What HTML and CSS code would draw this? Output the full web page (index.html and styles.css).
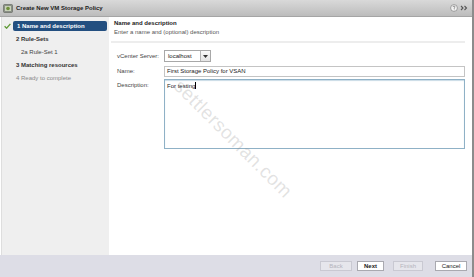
FILE: index.html
```html
<!DOCTYPE html>
<html>
<head>
<meta charset="utf-8">
<link rel="stylesheet" href="styles.css">
</head>
<body>
<div class="window">
  <div class="titlebar">
    <svg class="ticon" width="10" height="10" viewBox="0 0 10 10">
      <rect x="0.5" y="1.5" width="9" height="8" rx="1" fill="#8a8f86" stroke="#5d6258" stroke-width="0.6"/>
      <rect x="2" y="3" width="6" height="5" fill="#c9d2b8"/>
      <circle cx="5" cy="5.5" r="1.8" fill="#6f8f3c"/>
    </svg>
    <span class="ttext">Create New VM Storage Policy</span>
    <span class="tright">
      <svg width="8" height="8" viewBox="0 0 8 8"><circle cx="4" cy="4" r="3.4" fill="#f4f4f4" stroke="#8a8a8a" stroke-width="0.8"/><path d="M3 3.1 Q3 2.1 4 2.1 Q5 2.1 5 3 Q5 3.6 4.2 4 L4.2 4.8" fill="none" stroke="#666" stroke-width="0.7"/><circle cx="4.2" cy="5.8" r="0.4" fill="#666"/></svg>
      <svg width="8" height="8" viewBox="0 0 8 8"><path d="M1 2 L3 4 L1 6 M4.5 2 L6.5 4 L4.5 6" fill="none" stroke="#555" stroke-width="1.1"/></svg>
    </span>
  </div>
  <div class="main">
    <div class="sidebar">
      <div class="step">
        <span class="check"><svg width="7" height="6" viewBox="0 0 7 6"><path d="M0.6 3.2 L2.6 5.2 L6.4 0.8" fill="none" stroke="#5f9a35" stroke-width="1.3"/></svg></span>
        <span class="pill">1 Name and description</span>
      </div>
      <div class="step bold">2 Rule-Sets</div>
      <div class="step sub">2a Rule-Set 1</div>
      <div class="step bold">3 Matching resources</div>
      <div class="step dim">4 Ready to complete</div>
    </div>
    <div class="content">
      <div class="header">
        <div class="htitle">Name and description</div>
        <div class="hsub">Enter a name and (optional) description</div>
      </div>
      <div class="form">
        <div class="row r1">
          <div class="label">vCenter Server:</div>
          <div class="select"><span class="sval">localhost</span><span class="sbtn"><svg width="5" height="3" viewBox="0 0 5 3"><path d="M0 0 L5 0 L2.5 3 Z" fill="#333"/></svg></span></div>
        </div>
        <div class="row r2">
          <div class="label">Name:</div>
          <div class="input">First Storage Policy for VSAN</div>
        </div>
        <div class="row r3">
          <div class="label">Description:</div>
          <div class="textarea">For testing<span class="caret"></span></div>
        </div>
      </div>
    </div>
  </div>
  <div class="footer">
    <span class="btn disabled b-back">Back</span>
    <span class="btn b-next">Next</span>
    <span class="btn disabled b-finish">Finish</span>
    <span class="btn b-cancel">Cancel</span>
  </div>
  <div class="watermark">settlersoman.com</div>
</div>
</body>
</html>
```
FILE: styles.css
```css
* { box-sizing: border-box; }
html, body { margin: 0; padding: 0; background: #ffffff; }
body { width: 474px; height: 277px; overflow: hidden; font-family: "Liberation Sans", Arial, sans-serif; font-size: 6px; color: #333; }

.window {
  position: relative;
  width: 474px;
  height: 277px;
  border-right: 2px solid #8c8c8c;
  display: flex;
  flex-direction: column;
  background: #fff;
}

.titlebar {
  height: 17px;
  flex: 0 0 17px;
  display: flex;
  align-items: center;
  padding: 0 4px 1px 3px;
  background: linear-gradient(#d9d9d9, #bcbcbc);
  border-bottom: 1px solid #a5a5a5;
}
.ticon { flex: 0 0 auto; margin-right: 3px; }
.ttext { font-weight: bold; color: #222; font-size: 6px; flex: 1; }
.tright { display: flex; gap: 2px; align-items: center; }

.main { flex: 1; display: flex; min-height: 0; }

.sidebar {
  width: 108px;
  flex: 0 0 108px;
  background: #efefef;
  border-left: 1px solid #dedede;
  margin-left: 1px;
  padding-top: 2px;
}
.step {
  height: 13px;
  display: flex;
  align-items: center;
  padding-left: 14px;
  color: #333;
}
.step:first-child { padding-left: 2px; }
.check { width: 9px; display: flex; align-items: center; }
.pill {
  flex: 1;
  height: 10px;
  margin-right: 2px;
  background: #234f80;
  border-radius: 2px;
  color: #fff;
  font-weight: bold;
  padding-left: 4px;
  display: flex;
  align-items: center;
}
.bold { font-weight: bold; color: #333; }
.sub { padding-left: 19px; color: #444; }
.dim { color: #8a8a8a; }

.content { flex: 1; padding: 2px 7px 0 2px; min-width: 0; }
.header { padding: 0 0 4px 3px; border-bottom: 2px solid #ededed; }
.htitle { font-weight: bold; color: #222; line-height: 9px; }
.hsub { color: #555; line-height: 9px; }

.form { padding: 7px 0 0 6px; }
.row { display: flex; align-items: flex-start; }
.label { width: 47px; flex: 0 0 47px; color: #444; }
.r1 { height: 12px; margin-bottom: 4px; }
.r1 .label { line-height: 12px; }
.r2 { height: 11px; margin-bottom: 2px; }
.r2 .label { line-height: 11px; }
.r3 .label { line-height: 12px; }

.select {
  width: 47px;
  height: 12px;
  border: 1px solid #a8a8a8;
  background: #fff;
  display: flex;
  align-items: stretch;
}
.sval { flex: 1; padding-left: 3px; line-height: 10px; color: #222; }
.sbtn {
  width: 10px;
  border-left: 1px solid #b5b5b5;
  background: linear-gradient(#fafafa, #e4e4e4);
  display: flex;
  align-items: center;
  justify-content: center;
}
.input {
  flex: 1;
  height: 11px;
  border: 1px solid #c4c4c4;
  padding-left: 2px;
  line-height: 9px;
  color: #222;
}
.textarea {
  flex: 1;
  height: 70px;
  border: 1px solid #8fb1c6;
  box-shadow: inset 0 1px 1px #c9dbe6;
  padding: 1px 2px;
  line-height: 10px;
  color: #222;
}
.caret { display: inline-block; width: 1px; height: 7px; background: #000; vertical-align: -1px; }

.footer {
  height: 22px;
  flex: 0 0 22px;
  background: #dddde6;
  display: flex;
  align-items: flex-start;
  justify-content: flex-end;
  padding: 6px 5px 0 0;
}
.btn {
  height: 10px;
  border: 1px solid #a9a9b0;
  background: #fff;
  color: #222;
  display: flex;
  align-items: center;
  justify-content: center;
  font-size: 6px;
}
.btn.disabled { background: #e6e6ec; border-color: #c9c9d2; color: #b4b4bc; }
.b-back { width: 32px; }
.b-next { width: 27px; margin-left: 5px; font-weight: bold; }
.b-finish { width: 30px; margin-left: 9px; }
.b-cancel { width: 32px; margin-left: 12px; }

.watermark {
  position: absolute;
  left: 143px;
  top: 128px;
  width: 180px;
  text-align: center;
  font-size: 19px;
  line-height: 22px;
  color: rgba(140, 140, 140, 0.25);
  transform: rotate(45deg);
  letter-spacing: 0.5px;
  pointer-events: none;
}
```
